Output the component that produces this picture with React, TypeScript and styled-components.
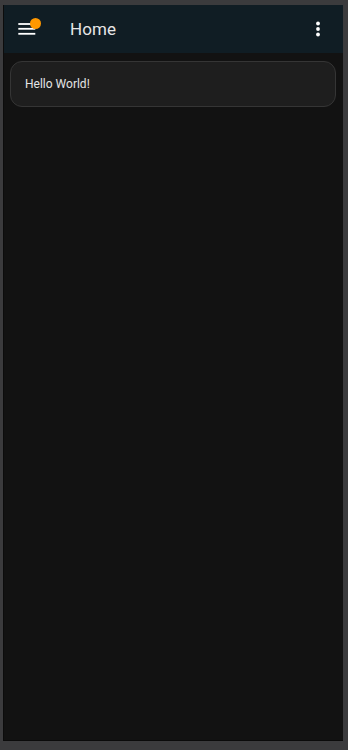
import React from 'react'
import styled, { createGlobalStyle } from 'styled-components'

const GlobalStyle = createGlobalStyle`
  html, body {
    margin: 0;
    padding: 0;
    background-color: #3b3b3d;
    font-family: Roboto, "Liberation Sans", Arial, sans-serif;
  }
  * {
    box-sizing: border-box;
  }
`

const Shell = styled.div`
  padding: 5px 5px 9px 3px;
  height: 750px;
`

const Screen = styled.div`
  display: flex;
  flex-direction: column;
  height: 100%;
  background-color: #121212;
  border-left: 1px solid #0c0c0c;
  border-bottom: 1px solid #0a0a0a;
`

const AppBar = styled.header`
  display: flex;
  align-items: center;
  height: 48px;
  padding: 0 13px 0 14px;
  background-color: #101d24;
  flex-shrink: 0;
`

const IconButton = styled.button`
  position: relative;
  display: flex;
  align-items: center;
  justify-content: center;
  width: 24px;
  height: 24px;
  padding: 0;
  border: none;
  background: transparent;
  color: #ffffff;
`

const Badge = styled.span`
  position: absolute;
  top: 0.5px;
  left: 11.5px;
  width: 11px;
  height: 11px;
  border-radius: 50%;
  background-color: #ff9800;
`

const Title = styled.h1`
  flex: 1;
  margin: 0 0 0 28px;
  font-size: 17px;
  font-weight: 400;
  color: #e6e6e6;
  letter-spacing: 0.1px;
`

const Content = styled.main`
  flex: 1;
  padding: 8px 7px 0 6px;
`

const Card = styled.div`
  display: flex;
  align-items: center;
  height: 46px;
  padding: 0 14px;
  background-color: #1e1e1e;
  border: 1px solid #353535;
  border-radius: 12px;
  font-size: 12px;
  color: #e4e4e4;
`

const App = () => {
  return (
    <>
      <GlobalStyle />
      <Shell>
        <Screen>
          <AppBar>
            <IconButton aria-label="menu">
              <svg width="24" height="24" viewBox="0 0 24 24">
                <rect x="0.3" y="6.1" width="17" height="1.8" fill="#fff" />
                <rect x="0.3" y="10.9" width="17" height="1.8" fill="#fff" />
                <rect x="0.3" y="15.9" width="17" height="1.8" fill="#fff" />
              </svg>
              <Badge />
            </IconButton>
            <Title>Home</Title>
            <IconButton aria-label="more">
              <svg width="24" height="24" viewBox="0 0 24 24">
                <circle cx="12" cy="6.5" r="1.9" fill="#fff" />
                <circle cx="12" cy="12" r="1.9" fill="#fff" />
                <circle cx="12" cy="17.5" r="1.9" fill="#fff" />
              </svg>
            </IconButton>
          </AppBar>
          <Content>
            <Card>Hello World!</Card>
          </Content>
        </Screen>
      </Shell>
    </>
  )
}

export default App
